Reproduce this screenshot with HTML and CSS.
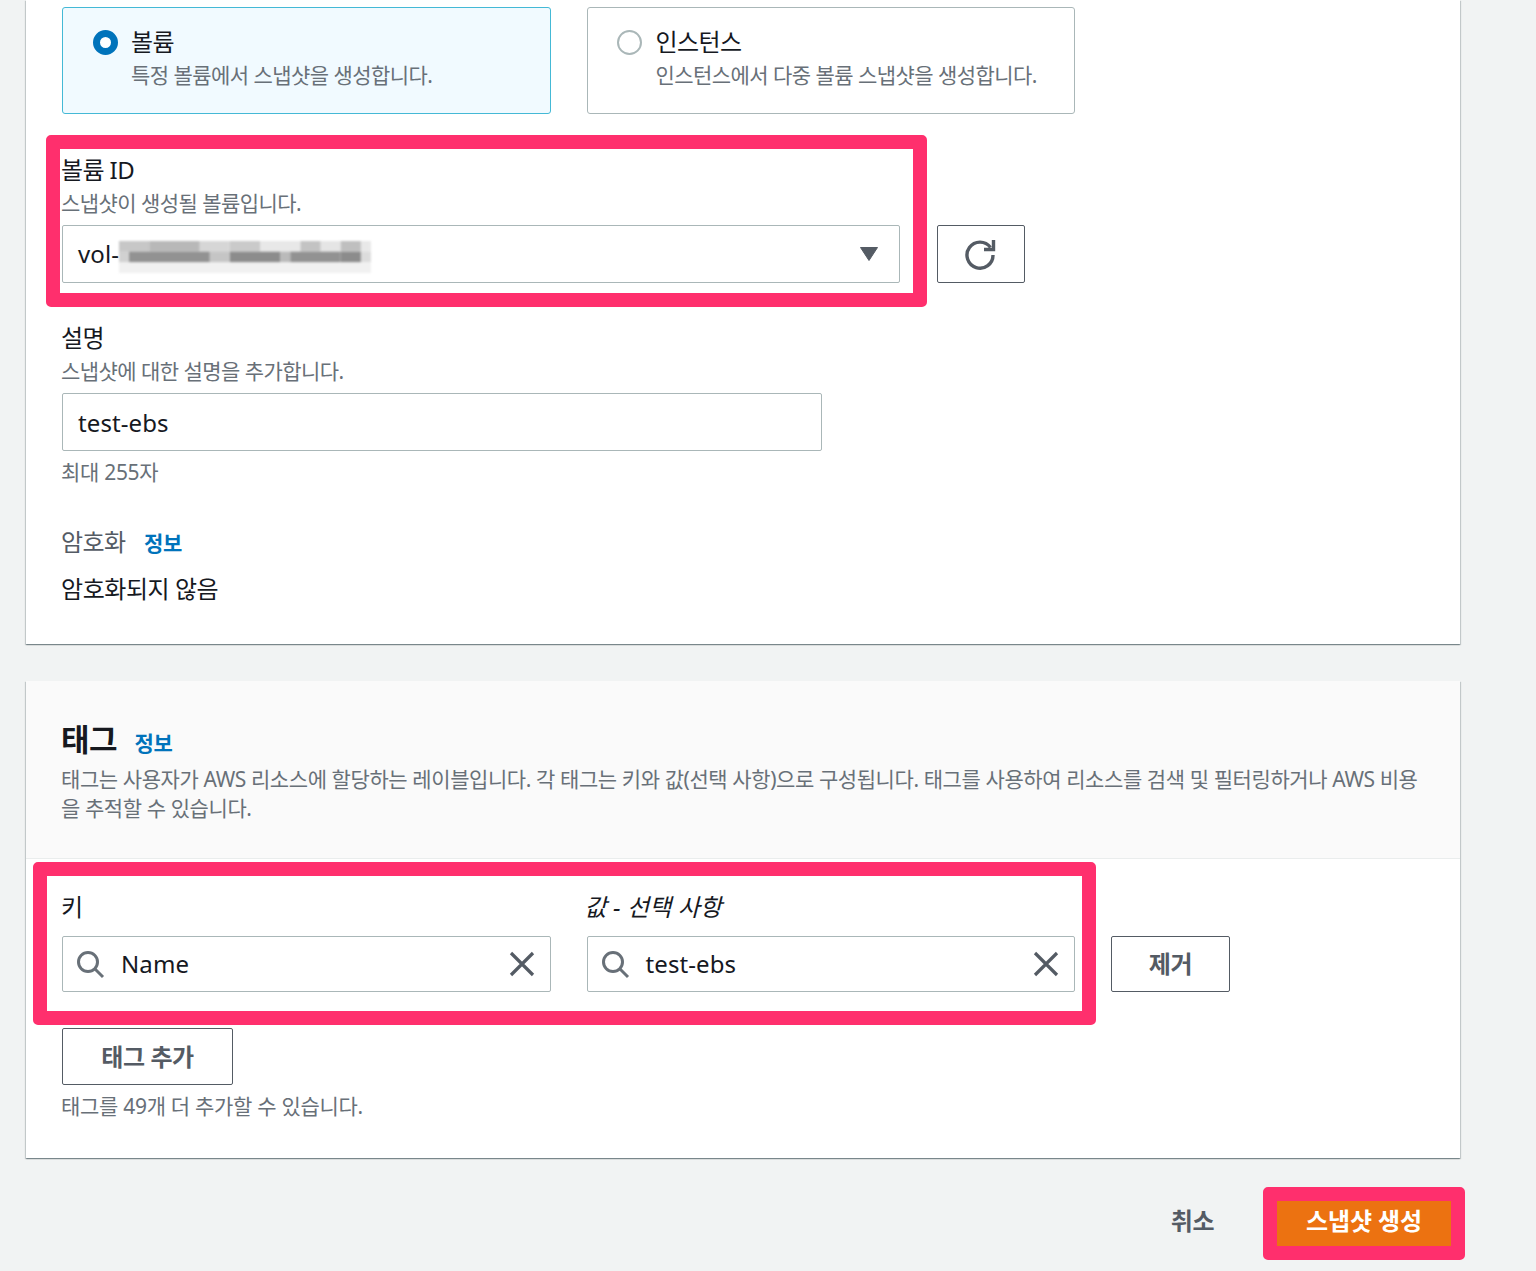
FILE: index.html
```html
<!DOCTYPE html>
<html lang="ko">
<head>
<meta charset="utf-8">
<title>스냅샷 생성</title>
<link rel="stylesheet" href="styles.css">
</head>
<body>
<div class="page">
  <section class="card card-top">
    <div class="radio-grid">
      <div class="radio-card selected">
        <span class="radio on"></span>
        <div>
          <div class="label">볼륨</div>
          <div class="desc radio-desc">특정 볼륨에서 스냅샷을 생성합니다.</div>
        </div>
      </div>
      <div class="radio-card">
        <span class="radio"></span>
        <div>
          <div class="label">인스턴스</div>
          <div class="desc radio-desc">인스턴스에서 다중 볼륨 스냅샷을 생성합니다.</div>
        </div>
      </div>
    </div>

    <div class="field-first">
      <div class="label">볼륨 ID</div>
      <div class="desc desc-gap">스냅샷이 생성될 볼륨입니다.</div>
      <div class="select-row">
        <div class="control select">
          <span class="value">vol-</span>
          <svg class="blur" width="262" height="32" viewBox="0 0 26 3" preserveAspectRatio="none">
            <g fill="#b4b4b4">
              <rect x="0" y="0" width="3" height="1" opacity=".75"/><rect x="3" y="0" width="5" height="1" opacity=".95"/><rect x="8" y="0" width="3" height="1" opacity=".55"/><rect x="11" y="0" width="3" height="1" opacity=".7"/><rect x="14" y="0" width="4" height="1" opacity=".3"/><rect x="18" y="0" width="2" height="1" opacity=".8"/><rect x="20" y="0" width="2" height="1" opacity=".35"/><rect x="22" y="0" width="2" height="1" opacity=".85"/><rect x="24" y="0" width="1" height="1" opacity=".3"/>
            </g>
            <g fill="#8c8c8c">
              <rect x="0" y="1" width="1" height="1" opacity=".4"/><rect x="1" y="1" width="8" height="1" opacity=".95"/><rect x="9" y="1" width="2" height="1" opacity=".5"/><rect x="11" y="1" width="5" height="1"/><rect x="16" y="1" width="1" height="1" opacity=".6"/><rect x="17" y="1" width="5" height="1" opacity=".95"/><rect x="22" y="1" width="2" height="1"/><rect x="24" y="1" width="1" height="1" opacity=".3"/>
            </g>
            <rect x="0" y="2" width="25" height="1" fill="#eeeeee" opacity=".8"/>
          </svg>
          <svg class="caret" width="20" height="16" viewBox="0 0 20 16"><path d="M1.5 1.5h17L10 14.5z" fill="#545b64" stroke="#545b64" stroke-linejoin="round"/></svg>
        </div>
        <button class="btn btn-refresh" type="button" aria-label="새로 고침">
          <svg width="32" height="32" viewBox="0 0 32 32" fill="none" stroke="#545b64" stroke-width="3.4"><path d="M28 17A13 13 0 1 1 25.5 9.5"/><path d="M28.5 2v9.5H19"/></svg>
        </button>
      </div>
    </div>

    <div class="field">
      <div class="label">설명</div>
      <div class="desc desc-gap">스냅샷에 대한 설명을 추가합니다.</div>
      <div class="control input-desc"><span class="value">test-ebs</span></div>
      <div class="desc hint">최대 255자</div>
    </div>

    <div class="field">
      <div class="label enc-label">암호화 <a class="info">정보</a></div>
      <div class="label enc-value">암호화되지 않음</div>
    </div>
  </section>

  <section class="card card-tags">
    <header class="tags-head">
      <h2 class="title">태그 <a class="info">정보</a></h2>
      <p class="desc tags-desc">태그는 사용자가 AWS 리소스에 할당하는 레이블입니다. 각 태그는 키와 값(선택 사항)으로 구성됩니다. 태그를 사용하여 리소스를 검색 및 필터링하거나 AWS 비용을 추적할 수 있습니다.</p>
    </header>
    <div class="tags-body">
      <div class="tag-row">
        <div class="tag-col">
          <div class="label">키</div>
          <div class="control search">
            <svg class="icon-search" width="30" height="30" viewBox="0 0 30 30" fill="none" stroke="#687078" stroke-width="3"><circle cx="13" cy="13" r="9.5"/><path d="M20 20l8 8"/></svg>
            <span class="value">Name</span>
            <svg class="icon-x" width="26" height="26" viewBox="0 0 26 26" fill="none" stroke="#545b64" stroke-width="3.2"><path d="M2 2l22 22M24 2L2 24"/></svg>
          </div>
        </div>
        <div class="tag-col">
          <div class="label"><em class="opt">값 - 선택 사항</em></div>
          <div class="control search">
            <svg class="icon-search" width="30" height="30" viewBox="0 0 30 30" fill="none" stroke="#687078" stroke-width="3"><circle cx="13" cy="13" r="9.5"/><path d="M20 20l8 8"/></svg>
            <span class="value">test-ebs</span>
            <svg class="icon-x" width="26" height="26" viewBox="0 0 26 26" fill="none" stroke="#545b64" stroke-width="3.2"><path d="M2 2l22 22M24 2L2 24"/></svg>
          </div>
        </div>
        <button class="btn btn-remove" type="button">제거</button>
      </div>
      <button class="btn btn-add" type="button">태그 추가</button>
      <div class="desc hint">태그를 49개 더 추가할 수 있습니다.</div>
    </div>
  </section>

  <footer class="actions">
    <a class="cancel">취소</a>
    <button class="btn-primary" type="button">스냅샷 생성</button>
  </footer>

  <div class="mark mark-volume"></div>
  <div class="mark mark-tags"></div>
  <div class="mark mark-submit"></div>
</div>
</body>
</html>
```

FILE: styles.css
```css
* { box-sizing: border-box; }
html, body { margin: 0; padding: 0; }
body {
  background: #f1f3f3;
  color: #16191f;
  font-family: "Noto Sans", "Noto Sans CJK KR", sans-serif;
  font-size: 21px;
  line-height: 30px;
}
.page { position: relative; width: 1536px; height: 1271px; overflow: hidden; padding: 0 76px 0 26px; }
.card {
  background: #fff;
  box-shadow: 0 1px 1px 0 rgba(0, 28, 36, .3), 1px 1px 1px 0 rgba(0, 28, 36, .15), -1px 1px 1px 0 rgba(0, 28, 36, .15);
}
.card-top { padding: 7px 36px 40px; }
.radio-grid { display: grid; grid-template-columns: 488.5px 488.5px; column-gap: 36px; }
.radio-card {
  height: 107px;
  border: 1px solid #aab7b8;
  border-radius: 3px;
  padding: 19px 29px 0;
  display: flex;
  gap: 15px;
}
.radio-card.selected { background: #f1faff; border-color: #44b9d6; padding-left: 30px; gap: 14px; }
.radio { width: 25px; height: 25px; border-radius: 50%; border: 2px solid #aab7b8; margin-top: 3px; flex: none; background: #fff; }
.radio.on { border: 7.5px solid #0073bb; }
.label { font-size: 24px; line-height: 30px; height: 30px; letter-spacing: -.6px; margin-left: -1px; }
.desc { font-size: 21px; color: #687078; line-height: 30px; letter-spacing: -.55px; margin-left: -1px; }
.radio-desc { margin-top: 3px; }
.desc-gap { margin-top: 3px; }
.field-first { margin-top: 41px; }
.field { margin-top: 40px; }
.select-row { display: flex; gap: 36.5px; margin-top: 7px; }
.control {
  background: #fff;
  border: 1px solid #aab7b8;
  border-radius: 2px;
  display: flex;
  align-items: center;
  height: 58px;
}
.value { font-size: 24px; letter-spacing: .1px; margin-left: -1px; padding-top: 1px; }
.select { position: relative; width: 838px; padding: 0 20px 0 16px; }
.select .value { padding-top: 0; }
.blur { position: absolute; left: 56px; top: 15px; filter: blur(.8px); }
.caret { margin-left: auto; }
.input-desc { width: 760px; padding: 0 16px; margin-top: 7px; }
.hint { margin-top: 6px; letter-spacing: -.3px; }
.enc-label { color: #545b64; }
.enc-value { margin-top: 17px; letter-spacing: -.45px; }
.info { color: #0073bb; font-size: 21px; font-weight: 700; margin-left: 13px; letter-spacing: -.4px; }
.btn {
  background: #fff;
  border: 1px solid #545b64;
  border-radius: 2px;
  color: #545b64;
  font: 700 24px/30px "Noto Sans", "Noto Sans CJK KR", sans-serif;
  letter-spacing: -.4px;
  padding: 0;
}
.btn-refresh { width: 88px; height: 58px; display: flex; align-items: center; justify-content: center; }
.card-tags { margin-top: 37px; }
.tags-head { background: #fafafa; border-bottom: 1px solid #eaeded; padding: 38px 36px 35px; }
.title { margin: 0 0 0 -1px; font-size: 31px; line-height: 40px; height: 40px; font-weight: 700; letter-spacing: -.5px; }
.title .info { margin-left: 10px; }
.tags-desc { margin: 6px 0 0 -1px; line-height: 29px; letter-spacing: -.41px; }
.tags-body { padding: 33px 36px 37px; }
.tag-row { display: flex; gap: 36px; align-items: flex-end; }
.tag-col { width: 488.5px; }
.tag-col .control { height: 56px; margin-top: 14px; }
.opt { letter-spacing: .1px; margin-left: -1px; }
.search { padding: 0 15px 0 12px; }
.icon-search { flex: none; }
.search .value { margin-left: 16px; padding-top: 0; }
.icon-x { margin-left: auto; margin-right: 0; }
.btn-remove { width: 119px; height: 56px; }
.btn-add { display: block; width: 171px; height: 57px; margin-top: 36px; }
.actions { display: flex; align-items: center; justify-content: flex-end; margin-top: 43px; padding-right: 9px; gap: 63px; }
.cancel { font-size: 24px; font-weight: 700; color: #545b64; letter-spacing: -.5px; margin-bottom: 5px; }
.btn-primary {
  width: 174px;
  height: 45px;
  background: #ec7211;
  border: 0;
  color: #fff;
  font: 700 24px/30px "Noto Sans", "Noto Sans CJK KR", sans-serif;
  letter-spacing: -.1px;
  padding: 0 0 6px;
}
.mark { position: absolute; border: 14px solid #ff2f6d; border-radius: 5px; pointer-events: none; }
.mark-volume { left: 46px; top: 135px; width: 881px; height: 172px; }
.mark-tags { left: 33px; top: 862px; width: 1063px; height: 163px; }
.mark-submit { left: 1263px; top: 1187px; width: 202px; height: 73px; }
```
